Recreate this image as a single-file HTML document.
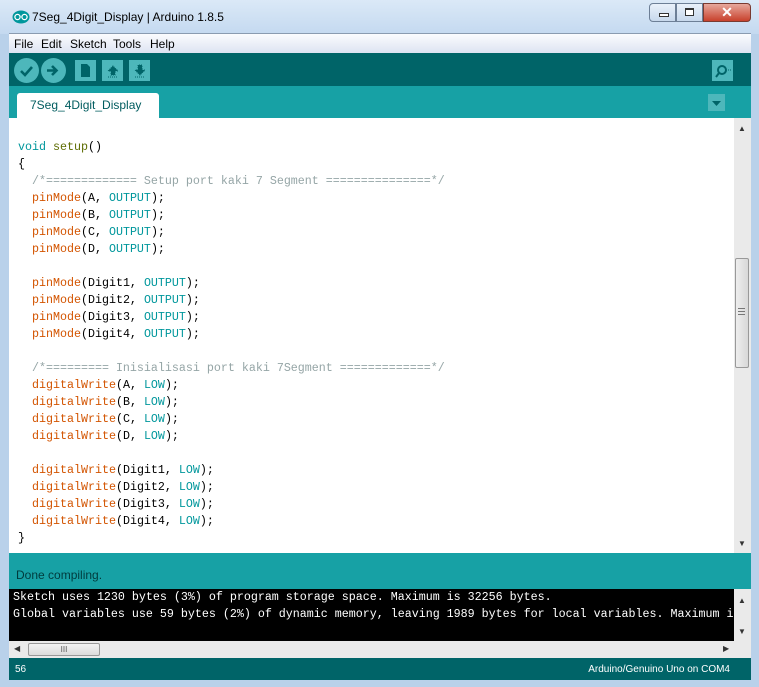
<!DOCTYPE html>
<html><head><style>
*{margin:0;padding:0;box-sizing:border-box}
body{width:759px;height:687px;overflow:hidden;background:#b9d1ea;font-family:"Liberation Sans",sans-serif;position:relative}
.abs{position:absolute}
#title{left:0;top:0;width:759px;height:34px;background:linear-gradient(#dbe9f7,#c4d9f0)}
#menu{left:9px;top:33px;width:742px;height:20px;background:linear-gradient(#fbfcfe,#dde3f2);font-size:12px;color:#000;border-top:1px solid #8a9bb0}
#menu span{position:absolute;top:3px}
#tb{left:9px;top:53px;width:742px;height:33px;background:#006468}
#tabs{left:9px;top:86px;width:742px;height:32px;background:#17a1a5}
#tab{left:17px;top:93px;width:142px;height:25px;background:#fff;border-radius:3px 3px 0 0;color:#005c5f;font-size:12px;padding:5px 0 0 13px}
#ed{left:9px;top:118px;width:742px;height:435px;background:#fff}
pre{position:absolute;left:18px;top:139px;font-family:"Liberation Mono",monospace;font-size:11.67px;line-height:17px;color:#000}
.k{color:#00979c}.f{color:#d35400}.s{color:#5e6d03}.c{color:#95a5a6}
#vs{left:734px;top:118px;width:17px;height:435px;background:#eaeaea}
#thumb{left:735px;top:258px;width:14px;height:110px;background:linear-gradient(90deg,#eee,#d8d8d8);border:1px solid #999;border-radius:2px}
#st{left:9px;top:553px;width:742px;height:36px;background:#17a1a5;font-size:12px;color:#003b3d;padding:15px 0 0 7px}
#con{left:9px;top:589px;width:742px;height:52px;background:#000;overflow:hidden}
#con pre{left:4px;top:0px;color:#fff;white-space:pre}
#cvs{left:734px;top:589px;width:17px;height:52px;background:#eaeaea}
#hs{left:9px;top:641px;width:742px;height:17px;background:#eaeaea}
#bb{left:9px;top:658px;width:742px;height:22px;background:#006468;color:#fff;font-size:10px}
.ic{background:#4db7bb;position:absolute}
</style></head><body>
<div id="title" class="abs"></div>
<svg class="abs" style="left:12px;top:10px" width="18" height="14"><ellipse cx="9" cy="7" rx="8.5" ry="6.5" fill="#00979c"/><circle cx="5.5" cy="7" r="2.6" fill="none" stroke="#fff" stroke-width="1.3"/><circle cx="12.5" cy="7" r="2.6" fill="none" stroke="#fff" stroke-width="1.3"/></svg>
<div class="abs" style="left:32px;top:10px;font-size:12px;color:#000">7Seg_4Digit_Display | Arduino 1.8.5</div>
<div class="abs" style="left:649px;top:3px;width:27px;height:19px;border:1px solid #6d7f96;border-radius:4px 0 0 4px;background:linear-gradient(#e9f1fa,#c7d8ec)"></div>
<div class="abs" style="left:659px;top:13px;width:10px;height:4px;border:1px solid #333;background:#fff"></div>
<div class="abs" style="left:676px;top:3px;width:27px;height:19px;border:1px solid #6d7f96;background:linear-gradient(#e9f1fa,#c7d8ec)"></div>
<div class="abs" style="left:685px;top:8px;width:9px;height:8px;border:1px solid #333;border-top-width:2px;background:#fff"></div>
<div class="abs" style="left:703px;top:3px;width:48px;height:19px;border:1px solid #7a3a30;border-radius:0 4px 4px 0;background:linear-gradient(#e7a89c,#c8412c);color:#fff;font-size:14px;font-weight:bold;text-align:center;line-height:17px">✕</div>
<div id="menu" class="abs"><span style="left:5px">File</span><span style="left:32px">Edit</span><span style="left:61px">Sketch</span><span style="left:104px">Tools</span><span style="left:141px">Help</span></div>
<div id="tb" class="abs"></div>
<div class="ic" style="left:14px;top:58px;width:25px;height:25px;border-radius:50%"></div>
<div class="ic" style="left:41px;top:58px;width:25px;height:25px;border-radius:50%"></div>
<svg class="abs" style="left:14px;top:58px" width="52" height="25"><path d="M7 13l4 4 7-8" stroke="#006468" stroke-width="2.6" fill="none"/><path d="M33 12.5h9M38 8l4.5 4.5L38 17" stroke="#006468" stroke-width="2.6" fill="none"/></svg>
<div class="ic" style="left:75px;top:60px;width:21px;height:21px"></div>
<div class="ic" style="left:102px;top:60px;width:21px;height:21px"></div>
<div class="ic" style="left:129px;top:60px;width:21px;height:21px"></div>
<svg class="abs" style="left:75px;top:60px" width="76" height="21"><path d="M6 4h6l3 3v10H6z" fill="#006468"/><path d="M38 6l-5 5h3v4h4v-4h3z M33 17h10" fill="#006468" stroke="#006468" stroke-dasharray="1 1"/><path d="M65 15l-5-5h3V5h4v5h3z M60 17h10" fill="#006468" stroke="#006468" stroke-dasharray="1 1"/></svg>
<div class="ic" style="left:712px;top:60px;width:21px;height:21px"></div>
<svg class="abs" style="left:712px;top:60px" width="21" height="21"><circle cx="10" cy="10" r="4" fill="none" stroke="#006468" stroke-width="2"/><path d="M7 13l-3 4" stroke="#006468" stroke-width="2"/><path d="M16 10h1M18 10h1" stroke="#006468"/></svg>
<div id="tabs" class="abs"></div>
<div id="tab" class="abs">7Seg_4Digit_Display</div>
<div class="abs" style="left:708px;top:94px;width:17px;height:17px;background:#4db7bb"></div>
<svg class="abs" style="left:708px;top:94px" width="17" height="17"><path d="M4 7h9l-4.5 5z" fill="#006468"/></svg>
<div id="ed" class="abs"></div>
<pre><span class="k">void</span> <span class="s">setup</span>()
{
  <span class="c">/*============= Setup port kaki 7 Segment ===============*/</span>
  <span class="f">pinMode</span>(A, <span class="k">OUTPUT</span>);
  <span class="f">pinMode</span>(B, <span class="k">OUTPUT</span>);
  <span class="f">pinMode</span>(C, <span class="k">OUTPUT</span>);
  <span class="f">pinMode</span>(D, <span class="k">OUTPUT</span>);

  <span class="f">pinMode</span>(Digit1, <span class="k">OUTPUT</span>);
  <span class="f">pinMode</span>(Digit2, <span class="k">OUTPUT</span>);
  <span class="f">pinMode</span>(Digit3, <span class="k">OUTPUT</span>);
  <span class="f">pinMode</span>(Digit4, <span class="k">OUTPUT</span>);

  <span class="c">/*========= Inisialisasi port kaki 7Segment =============*/</span>
  <span class="f">digitalWrite</span>(A, <span class="k">LOW</span>);
  <span class="f">digitalWrite</span>(B, <span class="k">LOW</span>);
  <span class="f">digitalWrite</span>(C, <span class="k">LOW</span>);
  <span class="f">digitalWrite</span>(D, <span class="k">LOW</span>);

  <span class="f">digitalWrite</span>(Digit1, <span class="k">LOW</span>);
  <span class="f">digitalWrite</span>(Digit2, <span class="k">LOW</span>);
  <span class="f">digitalWrite</span>(Digit3, <span class="k">LOW</span>);
  <span class="f">digitalWrite</span>(Digit4, <span class="k">LOW</span>);
}</pre>
<div id="vs" class="abs"></div>
<div class="abs" style="left:738px;top:124px;font-size:8px;color:#333">▲</div>
<div class="abs" style="left:738px;top:539px;font-size:8px;color:#333">▼</div>
<div id="thumb" class="abs"></div>
<div class="abs" style="left:738px;top:308px;width:7px;height:7px;border-top:1px solid #777;border-bottom:1px solid #777"><div style="margin-top:2px;border-top:1px solid #777"></div></div>
<div id="st" class="abs">Done compiling.</div>
<div id="con" class="abs"><pre style="top:0">Sketch uses 1230 bytes (3%) of program storage space. Maximum is 32256 bytes.
Global variables use 59 bytes (2%) of dynamic memory, leaving 1989 bytes for local variables. Maximum is</pre></div>
<div id="cvs" class="abs"></div>
<div class="abs" style="left:738px;top:596px;font-size:8px;color:#333">▲</div>
<div class="abs" style="left:738px;top:627px;font-size:8px;color:#333">▼</div>
<div id="hs" class="abs"></div>
<div class="abs" style="left:14px;top:644px;font-size:8px;color:#333">◀</div>
<div class="abs" style="left:723px;top:644px;font-size:8px;color:#333">▶</div>
<div class="abs" style="left:28px;top:643px;width:72px;height:13px;border:1px solid #999;border-radius:2px;background:linear-gradient(#f2f2f2,#dcdcdc);font-size:8px;text-align:center;line-height:11px;color:#555">III</div>
<div id="bb" class="abs"><span class="abs" style="left:6px;top:6px">56</span><span class="abs" style="right:21px;top:6px">Arduino/Genuino Uno on COM4</span></div>
</body></html>
